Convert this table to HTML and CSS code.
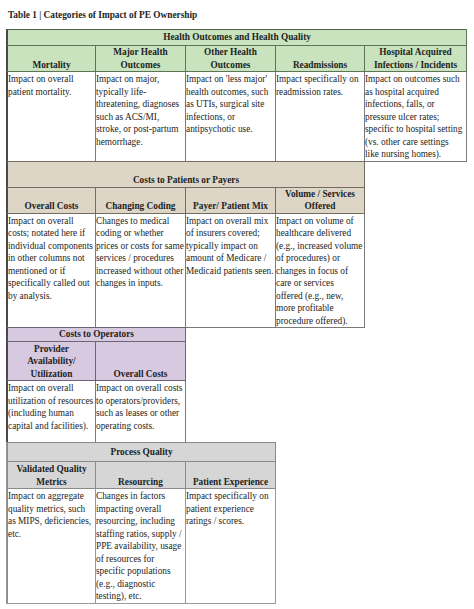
FILE: index.html
```html
<!DOCTYPE html>
<html>
<head>
<meta charset="utf-8">
<link rel="stylesheet" href="styles.css">
</head>
<body>
<div class="page">
  <div class="title">Table 1 | Categories of Impact of PE Ownership</div>
  <div class="tables">
    <table class="sec sec1">
      <colgroup><col class="c1"><col class="c2"><col class="c3"><col class="c4"><col class="c5"></colgroup>
      <tr class="h h1"><th colspan="5">Health Outcomes and Health Quality</th></tr>
      <tr class="s s1"><th>Mortality</th><th>Major Health Outcomes</th><th>Other Health Outcomes</th><th>Readmissions</th><th>Hospital Acquired Infections / Incidents</th></tr>
      <tr class="b b1">
        <td>Impact on overall patient mortality.</td>
        <td>Impact on major, typically life-threatening, diagnoses such as ACS/MI, stroke, or post-partum hemorrhage.</td>
        <td>Impact on 'less major' health outcomes, such as UTIs, surgical site infections, or antipsychotic use.</td>
        <td>Impact specifically on readmission rates.</td>
        <td>Impact on outcomes such as hospital acquired infections, falls, or pressure ulcer rates; specific to hospital setting (vs. other care settings like nursing homes).</td>
      </tr>
    </table>
    <table class="sec sec2">
      <colgroup><col class="c1"><col class="c2"><col class="c3"><col class="c4"></colgroup>
      <tr class="h h2"><th colspan="4">Costs to Patients or Payers</th></tr>
      <tr class="s s2"><th>Overall Costs</th><th>Changing Coding</th><th>Payer/ Patient Mix</th><th>Volume / Services Offered</th></tr>
      <tr class="b b2">
        <td>Impact on overall costs; notated here if individual components in other columns not mentioned or if specifically called out by analysis.</td>
        <td>Changes to medical coding or whether prices or costs for same services / procedures increased without other changes in inputs.</td>
        <td>Impact on overall mix of insurers covered; typically impact on amount of Medicare / Medicaid patients seen.</td>
        <td>Impact on volume of healthcare delivered (e.g., increased volume of procedures) or changes in focus of care or services<br>offered (e.g., new, more profitable procedure offered).</td>
      </tr>
    </table>
    <table class="sec sec3">
      <colgroup><col class="c1"><col class="c2"></colgroup>
      <tr class="h h3"><th colspan="2">Costs to Operators</th></tr>
      <tr class="s s3"><th>Provider<br>Availability/<br>Utilization</th><th>Overall Costs</th></tr>
      <tr class="b b3">
        <td>Impact on overall utilization of resources (including human capital and facilities).</td>
        <td>Impact on overall costs to operators/providers, such as leases or other operating costs.</td>
      </tr>
    </table>
    <table class="sec sec4">
      <colgroup><col class="c1"><col class="c2"><col class="c3"></colgroup>
      <tr class="h h4"><th colspan="3">Process Quality</th></tr>
      <tr class="s s4"><th>Validated Quality Metrics</th><th>Resourcing</th><th>Patient Experience</th></tr>
      <tr class="b b4">
        <td>Impact on aggregate quality metrics, such as MIPS, deficiencies, etc.</td>
        <td>Changes in factors impacting overall resourcing, including staffing ratios, supply / PPE availability, usage of resources for specific populations (e.g., diagnostic testing), etc.</td>
        <td>Impact specifically on patient experience ratings / scores.</td>
      </tr>
    </table>
  </div>
</div>
</body>
</html>
```

FILE: styles.css
```css
html, body {
  margin: 0;
  padding: 0;
  background: #ffffff;
}

.page {
  padding: 9px 0 0 7px;
  font-family: "Liberation Serif", "Times New Roman", serif;
  font-size: 9.3px;
  color: #1e1e1e;
}

.title {
  font-weight: bold;
  line-height: 12px;
  height: 12px;
  padding-left: 1px;
  margin-bottom: 8px;
}

.tables {
  display: flex;
  flex-direction: column;
  align-items: flex-start;
}

.sec {
  border-collapse: collapse;
  table-layout: fixed;
  line-height: 12.5px;
  box-shadow: -1px 0 0 #4a4a4a;
}

.sec + .sec {
  margin-top: -1px;
}

.sec th, .sec td {
  border: 1px solid #7a7a7a;
  padding: 0;
  overflow: hidden;
}

.sec th {
  font-weight: bold;
  text-align: center;
  vertical-align: bottom;
}

.sec td {
  text-align: left;
  vertical-align: top;
  padding-top: 1px;
}

.sec td:nth-child(4) {
  padding-right: 1px;
}

.sec td:nth-child(5) {
  padding-right: 2px;
}

.sec tr > :first-child {
  border-left-color: #4a4a4a;
}

.sec4 {
  box-shadow: -1px 0 0 #9a9a9a;
}

.sec4 tr > :first-child {
  border-left-color: #8a8a8a;
}

.c1 { width: 88px; }
.c2 { width: 90px; }
.c3 { width: 90px; }
.c4 { width: 89px; }
.c5 { width: 102px; }

.sec1 { width: 459px; }
.sec2 { width: 357px; }
.sec3 { width: 179px; }
.sec4 { width: 269px; }

.sec1 th { background: #c9e3bf; border-color: #5e7458; }
.sec1 .h1 th { border-top: 1px solid #4d6448; }
.sec2 th { background: #ddd6c7; border-color: #746d5f; }
.sec3 th { background: #d7c9e0; border-color: #6e6478; }
.sec4 th { background: #d6d6d6; border-color: #8a8a8a; }
.sec4 td { border-color: #9a9a9a; }

.h1 { height: 16px; }
.s1 { height: 25px; }
.b1 { height: 87px; }

.h2 { height: 26px; }
.s2 { height: 26px; }
.b2 { height: 112px; }

.h3 { height: 14px; }
.s3 { height: 39px; }
.b3 { height: 62px; }

.h4 { height: 19px; }
.s4 { height: 27px; }
.b4 { height: 112px; }

.h1 th, .h3 th, .h4 th { vertical-align: middle; }
```
